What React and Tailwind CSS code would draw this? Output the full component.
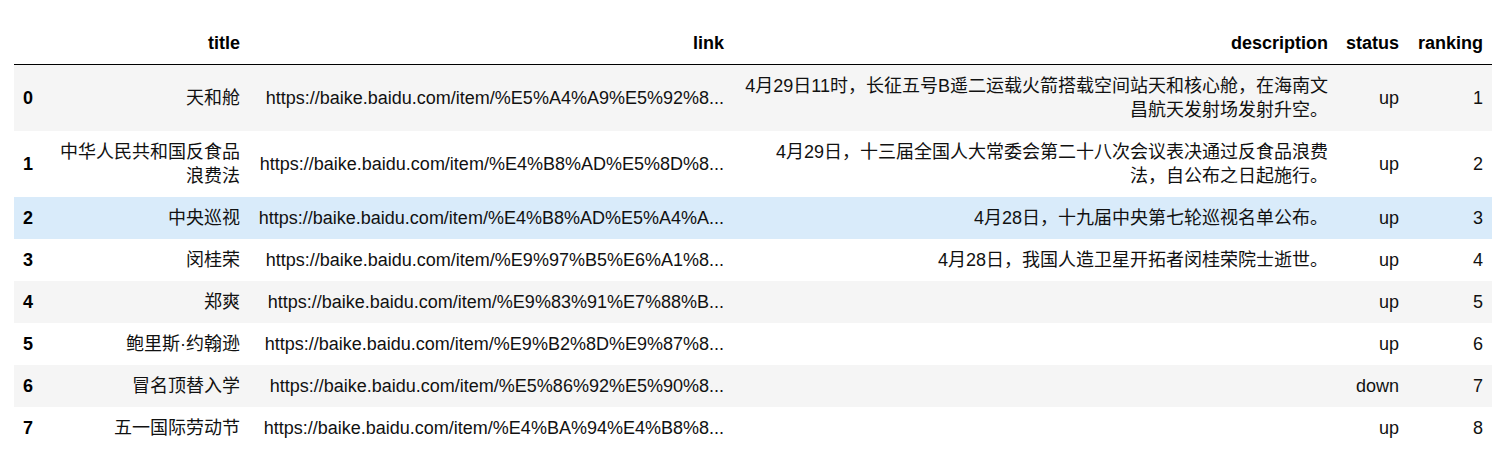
const columns = ["title", "link", "description", "status", "ranking"];

const rows = [
  {
    title: "天和舱",
    link: "https://baike.baidu.com/item/%E5%A4%A9%E5%92%8...",
    description: ["4月29日11时，长征五号B遥二运载火箭搭载空间站天和核心舱，在海南文", "昌航天发射场发射升空。"],
    status: "up",
    ranking: 1,
  },
  {
    title: ["中华人民共和国反食品", "浪费法"],
    link: "https://baike.baidu.com/item/%E4%B8%AD%E5%8D%8...",
    description: ["4月29日，十三届全国人大常委会第二十八次会议表决通过反食品浪费", "法，自公布之日起施行。"],
    status: "up",
    ranking: 2,
  },
  {
    title: "中央巡视",
    link: "https://baike.baidu.com/item/%E4%B8%AD%E5%A4%A...",
    description: "4月28日，十九届中央第七轮巡视名单公布。",
    status: "up",
    ranking: 3,
  },
  {
    title: "闵桂荣",
    link: "https://baike.baidu.com/item/%E9%97%B5%E6%A1%8...",
    description: "4月28日，我国人造卫星开拓者闵桂荣院士逝世。",
    status: "up",
    ranking: 4,
  },
  {
    title: "郑爽",
    link: "https://baike.baidu.com/item/%E9%83%91%E7%88%B...",
    description: "",
    status: "up",
    ranking: 5,
  },
  {
    title: "鲍里斯·约翰逊",
    link: "https://baike.baidu.com/item/%E9%B2%8D%E9%87%8...",
    description: "",
    status: "up",
    ranking: 6,
  },
  {
    title: "冒名顶替入学",
    link: "https://baike.baidu.com/item/%E5%86%92%E5%90%8...",
    description: "",
    status: "down",
    ranking: 7,
  },
  {
    title: "五一国际劳动节",
    link: "https://baike.baidu.com/item/%E4%BA%94%E4%B8%8...",
    description: "",
    status: "up",
    ranking: 8,
  },
];

// hovered row in the notebook
const HOVER = 2;

function Lines({ value }) {
  if (!Array.isArray(value)) return value;
  return value.map((line, i) => (
    <span key={i} className="block whitespace-nowrap">
      {line}
    </span>
  ));
}

export default function App() {
  return (
    <div
      className="min-h-screen bg-white pt-[22px] pl-[14px] text-[18px] leading-[24px] text-[#111]"
      style={{ fontFamily: '"Liberation Sans", Arial, "Noto Sans CJK SC", sans-serif' }}
    >
      <table className="table-fixed border-collapse">
        <colgroup>
          <col className="w-[39px]" />
          <col className="w-[196px]" />
          <col className="w-[484px]" />
          <col className="w-[604px]" />
          <col className="w-[70px]" />
          <col className="w-[84px]" />
        </colgroup>
        <thead>
          <tr className="border-b border-black">
            <th className="px-[9px] py-[9px]"></th>
            {columns.map((c) => (
              <th key={c} className="px-[9px] py-[9px] text-right font-bold whitespace-nowrap text-black">
                {c}
              </th>
            ))}
          </tr>
        </thead>
        <tbody>
          {rows.map((r, i) => (
            <tr
              key={i}
              className={
                i === HOVER ? "bg-[#d9ebfa]" : i % 2 === 0 ? "bg-[#f5f5f5]" : "bg-white"
              }
            >
              <th className="px-[9px] py-[9px] text-left font-bold align-middle text-black">{i}</th>
              <td className="pl-[7px] pr-[9px] py-[9px] text-right align-middle whitespace-nowrap">
                <Lines value={r.title} />
              </td>
              <td className="px-[9px] py-[9px] text-right align-middle whitespace-nowrap">
                {r.link}
              </td>
              <td className="px-[9px] py-[9px] text-right align-middle">
                <Lines value={r.description} />
              </td>
              <td className="px-[9px] py-[9px] text-right align-middle">{r.status}</td>
              <td className="px-[9px] py-[9px] text-right align-middle">{r.ranking}</td>
            </tr>
          ))}
        </tbody>
      </table>
    </div>
  );
}
